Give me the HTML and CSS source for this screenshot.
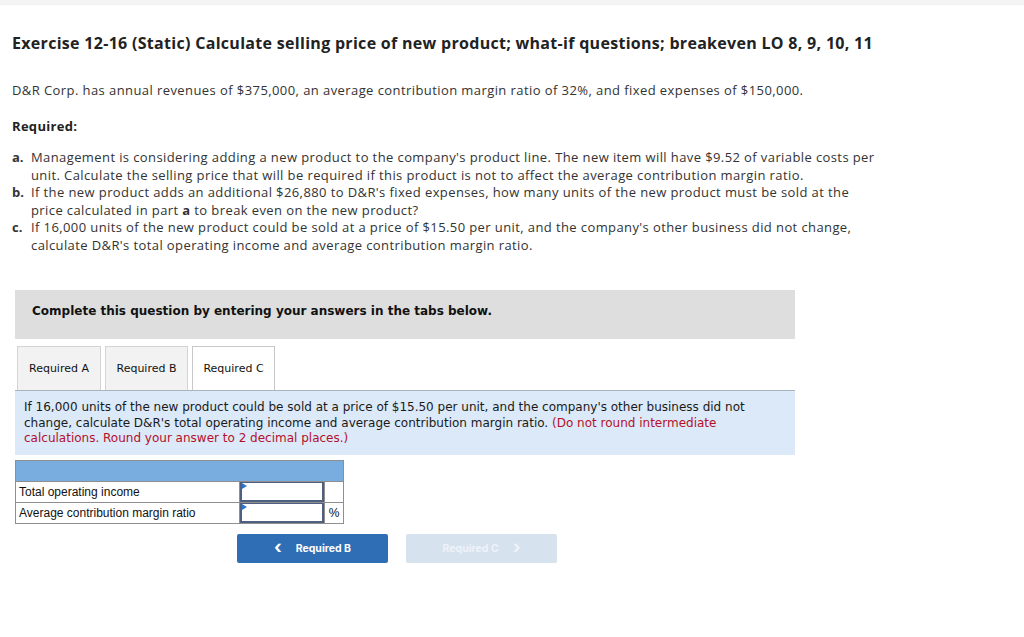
FILE: index.html
```html
<!DOCTYPE html>
<html>
<head>
<meta charset="utf-8">
<link rel="stylesheet" href="styles.css">
</head>
<body>
<div class="topbar"></div>
<main class="page">
  <h1 class="title">Exercise 12-16 (Static) Calculate selling price of new product; what-if questions; breakeven LO 8, 9, 10, 11</h1>
  <p class="intro">D&amp;R Corp. has annual revenues of $375,000, an average contribution margin ratio of 32%, and fixed expenses of $150,000.</p>
  <p class="req">Required:</p>
  <ol class="parts">
    <li><span class="mark">a.</span><span>Management is considering adding a new product to the company's product line. The new item will have $9.52 of variable costs per unit. Calculate the selling price that will be required if this product is not to affect the average contribution margin ratio.</span></li>
    <li><span class="mark">b.</span><span>If the new product adds an additional $26,880 to D&amp;R's fixed expenses, how many units of the new product must be sold at the price calculated in part <b>a</b> to break even on the new product?</span></li>
    <li><span class="mark">c.</span><span>If 16,000 units of the new product could be sold at a price of $15.50 per unit, and the company's other business did not change, calculate D&amp;R's total operating income and average contribution margin ratio.</span></li>
  </ol>

  <div class="panel">
    <div class="banner">Complete this question by entering your answers in the tabs below.</div>
    <div class="tabs">
      <div class="tab">Required A</div>
      <div class="tab">Required B</div>
      <div class="tab active">Required C</div>
    </div>
    <div class="instr">If 16,000 units of the new product could be sold at a price of $15.50 per unit, and the company's other business did not change, calculate D&amp;R's total operating income and average contribution margin ratio. <span class="red">(Do not round intermediate calculations. Round your answer to 2 decimal places.)</span></div>

    <table class="grid">
      <colgroup><col class="c1"><col class="c2"><col class="c3"></colgroup>
      <tr class="head"><td colspan="3"></td></tr>
      <tr>
        <td class="label">Total operating income</td>
        <td class="inp"><div class="box"></div></td>
        <td class="unit"></td>
      </tr>
      <tr>
        <td class="label">Average contribution margin ratio</td>
        <td class="inp"><div class="box"></div></td>
        <td class="unit">%</td>
      </tr>
    </table>

    <div class="nav">
      <button class="btn prev"><span class="chev">&lsaquo;</span>Required B</button>
      <button class="btn next">Required C<span class="chev r">&rsaquo;</span></button>
    </div>
  </div>
</main>
</body>
</html>
```
FILE: styles.css
```css
html, body {
  margin: 0;
  padding: 0;
  background: #fff;
}
body {
  font-family: "Open Sans", "Liberation Sans", sans-serif;
  color: #222;
}
.topbar {
  height: 4px;
  background: #f4f4f4;
  border-bottom: 1px solid #f0f0f0;
}
.page {
  padding: 0 12px;
}
.title {
  margin: 28px 0 0;
  font-size: 16px;
  line-height: 20px;
  font-weight: 700;
  color: #222;
  letter-spacing: 0.3px;
}
.intro {
  margin: 28px 0 0;
  font-size: 13px;
  line-height: 18px;
  color: #333;
  letter-spacing: 0.42px;
}
.req {
  margin: 18px 0 0;
  font-size: 13px;
  line-height: 18px;
  font-weight: 700;
  color: #222;
  letter-spacing: 0.3px;
}
.parts {
  list-style: none;
  margin: 14px 0 0;
  padding: 0;
  font-size: 13px;
  line-height: 17.5px;
  color: #333;
  letter-spacing: 0.4px;
  width: 870px;
}
.parts li {
  display: flex;
}
.mark {
  flex: 0 0 19px;
  font-weight: 700;
  letter-spacing: 0;
}
.panel {
  margin: 36px 0 0 3px;
  width: 780px;
}
.banner {
  background: #dedede;
  height: 49px;
  box-sizing: border-box;
  padding: 13px 17px;
  font-family: "DejaVu Sans", Verdana, sans-serif;
  font-size: 12px;
  line-height: 16px;
  font-weight: 700;
  color: #111;
}
.tabs {
  display: flex;
  gap: 4px;
  margin: 7px 0 0 2px;
}
.tab {
  width: 83px;
  height: 44px;
  box-sizing: border-box;
  border: 1px solid #d4d4d4;
  border-bottom: none;
  background: #f2f2f2;
  font-family: "DejaVu Sans", Verdana, sans-serif;
  font-size: 11px;
  line-height: 44px;
  text-align: center;
  color: #111;
}
.tab:first-child {
  width: 84px;
}
.tab.active {
  background: #fff;
  border-color: #c8c8c8;
}
.instr {
  background: #dbe9f8;
  border-top: 1px solid #a9b4bf;
  padding: 9px 9px 8px;
  font-family: "DejaVu Sans", Verdana, sans-serif;
  font-size: 12px;
  line-height: 15.5px;
  color: #1a1a1a;
}
.red {
  color: #b5102a;
}
.grid {
  margin-top: 5px;
  border-collapse: collapse;
  table-layout: fixed;
  width: 328px;
  font-family: "Liberation Sans", Arial, sans-serif;
  font-size: 12px;
  color: #111;
}
.c1 { width: 224px; }
.c2 { width: 85px; }
.c3 { width: 19px; }
.grid td {
  border: 1px solid #8e8e8e;
  padding: 0;
  height: 20px;
}
.grid .head td {
  background: #79acdf;
  height: 20px;
}
.label {
  padding-left: 3px !important;
}
.inp {
  position: relative;
}
.box {
  position: relative;
  border: 2px solid #4f5f80;
  border-top-width: 1px;
  box-sizing: border-box;
  height: 20px;
  margin: 0;
}
.box::before {
  content: "";
  position: absolute;
  left: 0;
  top: 0;
  border-left: 5px solid #2e74c9;
  border-top: 3px solid transparent;
  border-bottom: 3px solid transparent;
}
.unit {
  text-align: center;
}
.nav {
  display: flex;
  gap: 18px;
  margin: 10px 0 0 222px;
}
.btn {
  width: 151px;
  height: 29px;
  border: none;
  border-radius: 2px;
  font-family: "Inter", "Liberation Sans", sans-serif;
  font-size: 10.5px;
  font-weight: 700;
  color: #fff;
  display: flex;
  align-items: center;
  justify-content: center;
  padding: 0;
}
.btn.prev {
  background: #2f6eb5;
}
.btn.next {
  background: #d7e2ef;
  color: #eef3f9;
}
.chev {
  font-size: 18px;
  line-height: 18px;
  margin-right: 14px;
  margin-top: -3px;
}
.chev.r {
  margin: -3px 0 0 14px;
}
```
